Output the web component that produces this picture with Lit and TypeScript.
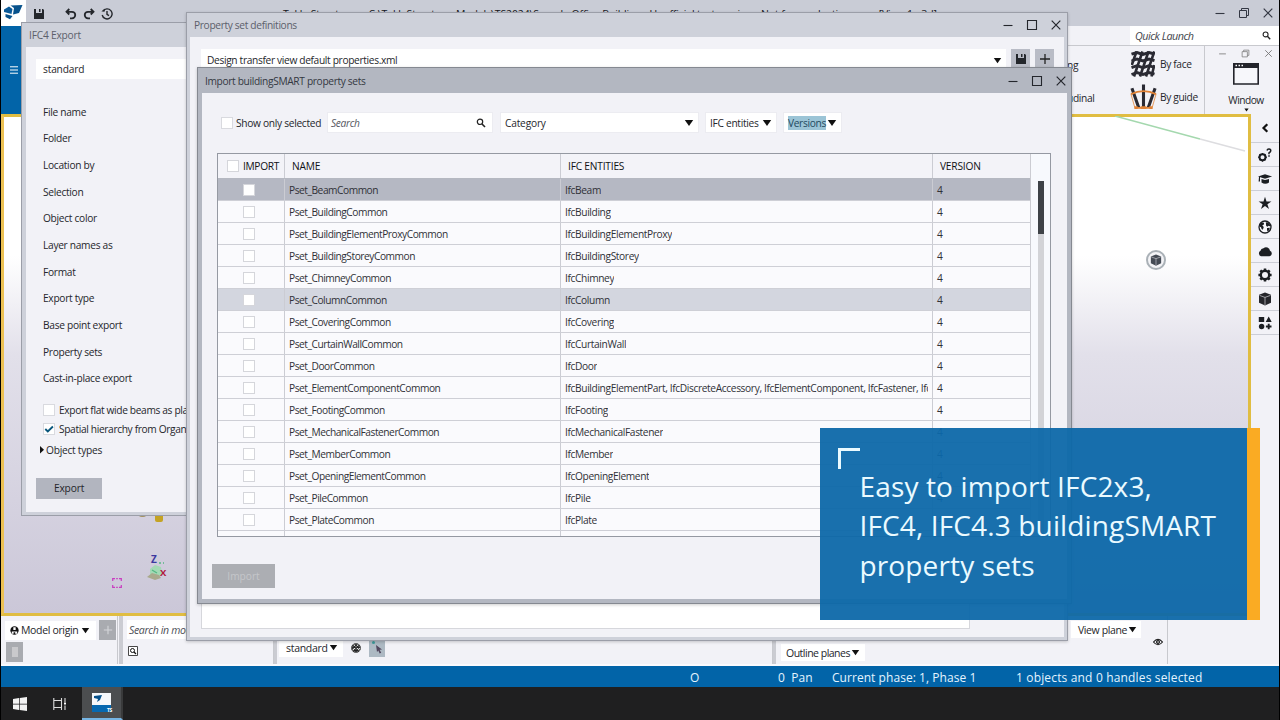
import { LitElement, html, css, svg } from "lit";
import { customElement, property } from "lit/decorators.js";
import { classMap } from "lit/directives/class-map.js";

const ROWS: Array<[string, string]> = [
  ["Pset_BeamCommon", "IfcBeam"],
  ["Pset_BuildingCommon", "IfcBuilding"],
  ["Pset_BuildingElementProxyCommon", "IfcBuildingElementProxy"],
  ["Pset_BuildingStoreyCommon", "IfcBuildingStorey"],
  ["Pset_ChimneyCommon", "IfcChimney"],
  ["Pset_ColumnCommon", "IfcColumn"],
  ["Pset_CoveringCommon", "IfcCovering"],
  ["Pset_CurtainWallCommon", "IfcCurtainWall"],
  ["Pset_DoorCommon", "IfcDoor"],
  ["Pset_ElementComponentCommon", "IfcBuildingElementPart, IfcDiscreteAccessory, IfcElementComponent, IfcFastener, IfcMechanicalFastener"],
  ["Pset_FootingCommon", "IfcFooting"],
  ["Pset_MechanicalFastenerCommon", "IfcMechanicalFastener"],
  ["Pset_MemberCommon", "IfcMember"],
  ["Pset_OpeningElementCommon", "IfcOpeningElement"],
  ["Pset_PileCommon", "IfcPile"],
  ["Pset_PlateCommon", "IfcPlate"],
  ["", ""],
];

const LABELS = [
  "File name", "Folder", "Location by", "Selection", "Object color", "Layer names as",
  "Format", "Export type", "Base point export", "Property sets", "Cast-in-place export",
];

const ICONS: Record<string, { box: string; body: unknown }> = {
  logo: { box: "0 0 24 26", body: svg`<path d="M3 9.500 8 6.500 11.500 9 10.500 14 3 12z" fill="#0a5a99"/><path d="M9.500 5.500 21.500 5 18 13 12 14.500 13 8z" fill="#07528c"/><path d="M4.500 14 11.500 16 9 19.200 4.500 17z" fill="#07528c"/>` },
  save: { box: "0 0 12 12", body: svg`<path d="M1 1h2v4h6V1h1l1 1v9H1z" fill="#24272c"/><path d="M6 1h1.5v3H6z" fill="#24272c"/>` },
  undo: { box: "0 0 12 12", body: svg`<path d="M2 3.800H7a3.200 3.200 0 0 1 0 6.500H5M4.300 1 1.500 3.800 4.300 6.500" fill="none" stroke="#24272c" stroke-width="1.800"/>` },
  redo: { box: "0 0 12 12", body: svg`<path d="M10 3.800H5a3.200 3.200 0 0 0 0 6.500H7M7.700 1l2.800 2.800L7.700 6.500" fill="none" stroke="#24272c" stroke-width="1.800"/>` },
  clock: { box: "0 0 12 12", body: svg`<path d="M2 3a5 5 0 1 1-.8 4M6 3v3.400l2 1.200" fill="none" stroke="#24272c" stroke-width="1.400"/><path d="M.4 3.400h3.400V.8z" fill="#24272c"/>` },
  min: { box: "0 0 12 12", body: svg`<path d="M1.500 6.500h9" stroke="currentColor" stroke-width="1.100"/>` },
  max: { box: "0 0 12 12", body: svg`<path d="M1.500 1.500h9v9h-9z" fill="none" stroke="currentColor" stroke-width="1.100"/>` },
  restore: { box: "0 0 12 12", body: svg`<path d="M1.500 3.500h7v7h-7zM3.500 3.500v-2h7v7h-2" fill="none" stroke="currentColor"/>` },
  close: { box: "0 0 12 12", body: svg`<path d="m1.700 1.700 8.600 8.600m0-8.600-8.600 8.600" stroke="currentColor" stroke-width="1.200"/>` },
  search: { box: "0 0 12 12", body: svg`<circle cx="5" cy="4.800" r="2.700" fill="none" stroke="#222" stroke-width="1.200"/><path d="m7 6.900 3 3.100" stroke="#222" stroke-width="1.500"/>` },
  plus: { box: "0 0 12 12", body: svg`<path d="M6 1v10M1 6h10" stroke="currentColor" stroke-width="1.300"/>` },
  down: { box: "0 0 10 8", body: svg`<path d="M.8 1h8.400L5 7z" fill="#111"/>` },
  right: { box: "0 0 6 8", body: svg`<path d="M1 0v7.400L5 3.700z" fill="#111"/>` },
  menu: { box: "0 0 10 10", body: svg`<path d="M1 1.800h8M1 5h8M1 8.200h8" stroke="#fff" stroke-width="1"/>` },
  mesh: { box: "0 0 24 26", body: svg`<path d="M5.500.5.800 14M11.500.5 3 25.500M17.500.5 9 25.500M23.300.5 15 25.500M23.300 14 20.500 25.500" stroke="#2a2a33" stroke-width="2.600"/><path d="M.5 3.200 6 1.500l6 2 6-2 5.500 1.500M.5 10l5.500-2 6 2 6-2 5.500 1.700M.5 16.700l5.500-2 6 2 6-2 5.500 1.700M.5 23.500l5.500-2 6 2 6-2 5.500 1.700" fill="none" stroke="#2a2a33" stroke-width="2.900"/>` },
  guide: { box: "0 0 28 26", body: svg`<path d="M14 0v24M2 4l7 20M26 4l-7 20" stroke="#2a2a33" stroke-width="3.200"/><path d="M1 10Q14 4 27 10M6 24.300h16" fill="none" stroke="#e08236" stroke-width="1.800"/><path d="m1 10 4 14M27 10l-4 14" stroke="#e08236" stroke-width=".8"/><path d="M4.500 22.500h3.500v3h-3.500zM20 22.500h3.500v3H20zM11 22.500h6v3h-6z" fill="#e08236"/>` },
  window: { box: "0 0 26 22", body: svg`<path d="M.8.800h24.400v20.200H.8z" fill="#f7f7fb" stroke="#23242b" stroke-width="1.600"/><path d="M0 0h26v5H0z" fill="#23242b"/><path d="M2.500 2.500h1.500m1.500 0H7m1.500 0H10" stroke="#fff" stroke-width="1.300"/>` },
  left: { box: "0 0 14 14", body: svg`<path d="M9.300 3.200 5.500 7l3.800 3.800" fill="none" stroke="#111" stroke-width="2.200"/>` },
  help: { box: "0 0 14 14", body: svg`<circle cx="4.500" cy="9.300" r="3" fill="none" stroke="#1b1e22" stroke-width="2"/><path d="M4.500 5v1.500m0 5.700v1.500M.2 9.300h1.500m5.600 0h1.500M1.500 6.300l1 1m4 4 1 1m0-6-1 1m-4 4-1 1" stroke="#1b1e22" stroke-width="1.400"/><path d="M9 2.500Q9.400.8 11 .9q2 .1 1.700 1.900Q12.500 4 11 4.800v1.400M11 7.300v1.500" fill="none" stroke="#1b1e22" stroke-width="1.500"/>` },
  cap: { box: "0 0 14 14", body: svg`<path d="m0 4.500 7-2.300 7 2.300-7 2.200z" fill="#1b1e22"/><path d="M3.500 7 7 8l4-1v3.500q-3.700 2.500-7.500 0zM1 5h1v4.500H.600z" fill="#1b1e22"/>` },
  star: { box: "0 0 14 14", body: svg`<path d="m7 .7 1.500 4.700h4.900l-4 2.800 1.600 4.800L7 10.100 3 13l1.600-4.800-4-2.800h4.900z" fill="#1b1e22"/>` },
  globe: { box: "0 0 14 14", body: svg`<circle cx="7" cy="7" r="6" fill="#f7f7fb" stroke="#1b1e22" stroke-width="1.300"/><path d="M1.500 5 3.500 2.500l2.300.2.300 1.500-1.800 1.200 1.500 1.600-1 2.700-1.200-.7L3 7.300 1.400 6.500zM7.800 2.200l2.400.3 2.300 2.700-.8 1-1.500-.5-.5 1-1.500-.7zM9 8l2.800-.3-.5 2.200-1.500 1.600-.8-1.200z" fill="#1b1e22"/>` },
  cloud: { box: "0 0 14 14", body: svg`<path d="M3 12.200a3 3 0 0 1-.5-5.500 3 3 0 0 1 3-2.500 4 4 0 0 1 6.500 2.500A2.900 2.900 0 0 1 11.500 12.200z" fill="#1b1e22"/>` },
  gear: { box: "0 0 14 14", body: svg`<circle cx="7" cy="7" r="4.200" fill="none" stroke="#1b1e22" stroke-width="2.400"/><path d="M7 .4v2.200m0 8.800v2.200M.4 7h2.200m8.800 0h2.200M2.300 2.300 4 4m6 6 1.700 1.700m0-9.400L10 4m-6 6-1.700 1.700" stroke="#1b1e22" stroke-width="2.500"/>` },
  cube: { box: "0 0 14 14", body: svg`<path d="m7 .6 6 2.200v8L7 13.600l-6-2.800v-8z" fill="currentColor"/><path d="m1.500 3.400 5.500 2 5.500-2M7 5.400V13" fill="none" stroke="#eeeef3" stroke-width=".6"/>` },
  shapes: { box: "0 0 14 14", body: svg`<path d="M.8 1h5.400v5H.8zM10.700.6l3 5.400h-6z" fill="#1b1e22"/><circle cx="3.600" cy="10.500" r="2.700" fill="#1b1e22"/><path d="M10.700 7.700v5.600M7.900 10.500h5.600" stroke="#1b1e22" stroke-width="1.900"/>` },
  person: { box: "0 0 10 10", body: svg`<circle cx="5" cy="5" r="4.600" fill="#111"/><path d="M3.700 1.500h2.600v3H3.700zM2 8.500V6h6v2.500H5.800V7H4v1.500z" fill="#fff"/>` },
  trash: { box: "0 0 16 20", body: svg`<path d="M5 5h6v10H5z" fill="#c9c9cc"/>` },
  framed: { box: "0 0 10 10", body: svg`<path d="M.5.500h9v9h-9z" fill="#fff" stroke="#333" stroke-width=".9"/><circle cx="4.500" cy="4.500" r="2" fill="none" stroke="#111"/><path d="m6 6 2 2" stroke="#111" stroke-width="1.200"/>` },
  hatch: { box: "0 0 10 10", body: svg`<circle cx="5" cy="5" r="4.500" fill="#fff" stroke="#222" stroke-width=".7"/><path d="m1.500 2 6.500 6.500M3.500.8l5.700 5.700M.8 3.500l5.700 5.700M8.500 2 2 8.500M6.500.8.8 6.500M9.200 3.500 3.500 9.200" stroke="#222" stroke-width="1.100"/>` },
  pointer: { box: "0 0 16 16", body: svg`<circle cx="4.500" cy="3.500" r="1.500" fill="#3e9b9b"/><path d="m7 6 6 4.500-2.400.3 1.600 3-1.500.8L9.300 11.500 8 13z" fill="#50455c"/>` },
  eye: { box: "0 0 10 8", body: svg`<path d="M.5 4Q5-1.500 9.500 4 5 9.500.5 4z" fill="none" stroke="#111" stroke-width="1.100"/><circle cx="5" cy="4" r="2" fill="#111"/><path d="M4.600 3h.9v2h-.9z" fill="#fff"/>` },
  check: { box: "0 0 10 10", body: svg`<path d="m1.300 5 2.500 2.500L8.900 2.500" fill="none" stroke="#07567c" stroke-width="1.800"/>` },
  win: { box: "0 0 14 14", body: svg`<path d="m0 2 6-.9v5.600H0zM6.700 1 14 0v6.700H6.700zM0 7.400h6v5.500L0 12zM6.700 7.400H14V14l-7.300-1z" fill="#f2f2f2"/>` },
  task: { box: "0 0 14 14", body: svg`<path d="M.8 1v12M8.500 1v12M.8 3.500h7.700M.8 10.500h7.700M12 1v4m0 3.500V13" fill="none" stroke="#ddd" stroke-width="1.100"/><path d="M11 5.500h2v2h-2z" fill="#fff"/>` },
  app: { box: "0 0 19 19", body: svg`<path d="M0 0h19v12H0z" fill="#f6f8fb"/><path d="M0 12h19v7H0z" fill="#0768b0"/><path d="m2 3 8-1-2 5-3 2 1-3-4-1z" fill="#07528c"/>` },
  axes: { box: "0 0 22 26", body: svg`<path d="m4 14 5-4 6 2 1 7-6 4-6-3z" fill="#a3d9b4"/><path d="m1 22 5-4 7 2 2 3-6 2z" fill="#a9a98c"/><path d="M13 8h2m2 0h1M6 15l5 3" stroke="#55b783" stroke-width="1.300"/>` },
  target: { box: "0 0 10 10", body: svg`<path d="M.7 3V.7H3M7 .7h2.300V3M9.300 7v2.300H7M3 9.300H.7V7M4.200.7h1.600M4.200 9.300h1.600" fill="none" stroke="#c93cc0" stroke-width="1.200"/>` },
};

@customElement("ui-icon")
class UiIcon extends LitElement {
  @property() name = "";
  @property({ type: Number }) w = 12;
  @property({ type: Number }) h = 12;
  static styles = css`:host { display: block; flex: none; } svg { display: block; }`;
  render() {
    const icon = ICONS[this.name];
    return html`<svg width=${this.w} height=${this.h} viewBox=${icon.box}>${icon.body}</svg>`;
  }
}

const ic = (name: string, w = 12, h = w) => html`<ui-icon class="ic-${name}" name=${name} .w=${w} .h=${h}></ui-icon>`;

@customElement("pset-table")
class PsetTable extends LitElement {
  static styles = css`
    :host { display: flex; box-sizing: border-box; width: 834px; height: 384px; border: 1px solid #9599a2; background: #f7f9fd; overflow: hidden; }
    .grid { width: 812px; flex: none; border-right: 1px solid #cbccd2; }
    .row { display: grid; grid-template-columns: 67px 276px 372px 97px; height: 22px; box-sizing: border-box; border-bottom: 1px solid #cecfd6; background: #fafafd; color: #303137; }
    .head { height: 25px; background: #f3f3f8; color: #101115; border-bottom: 1px solid #b5b8c1; font-weight: 500; letter-spacing: -0.2px; }
    .dark { background: #b5b8c3; }
    .mid { background: #d3d6df; }
    .cell { display: flex; align-items: center; box-sizing: border-box; border-right: 1px solid #cbccd3; padding: 0 4px; white-space: nowrap; overflow: hidden; }
    .cell:last-child { border: 0; }
    .name { letter-spacing: -0.46px; }
    .clip { overflow: hidden; letter-spacing: -0.37px; }
    .tick { padding: 0 4px 0 0; justify-content: center; }
    .head .cell { padding-left: 7px; }
    .head .tick { padding: 0 0 0 4px; gap: 4px; font-weight: 400; letter-spacing: -0.3px; }
    .box { width: 12px; height: 12px; box-sizing: border-box; border: 1px solid #d5d6db; background: #fff; flex: none; }
    .rail { width: 6px; height: 355px; margin: 27px 0 0 7px; background: #d2d3d7; }
    .thumb { height: 53px; background: #3e4247; }
  `;
  render() {
    return html`
      <div class="grid">
        <div class="row head">
          <div class="cell tick"><span class="box"></span>IMPORT</div>
          <div class="cell">NAME</div><div class="cell">IFC ENTITIES</div><div class="cell">VERSION</div>
        </div>
        ${ROWS.map(([name, entity], i) => html`
          <div class=${classMap({ row: true, dark: i === 0, mid: i === 5 })}>
            <div class="cell tick"><span class="box"></span></div>
            <div class="cell name">${name}</div>
            <div class="cell"><span class="clip">${entity}</span></div>
            <div class="cell">${name ? "4" : ""}</div>
          </div>`)}
      </div>
      <div class="rail"><div class="thumb"></div></div>`;
  }
}

@customElement("app-root")
class AppRoot extends LitElement {
  static styles = css`
    :host { display: block; position: relative; width: 1280px; height: 720px; overflow: hidden; background: #000; font-family: "Open Sans", "Noto Sans", sans-serif; font-size: 10.2px; letter-spacing: -0.34px; line-height: 14px; color: #25262b; white-space: nowrap; }
    .desk { display: flex; flex-direction: column; height: 720px; margin: 0 1px; background: #f2f2f7; }
    .row { display: flex; align-items: center; }
    .white { background: #fff; box-sizing: border-box; }
    .appbar { height: 26px; background: #c9ccd6; color: #333743; }
    .logo { width: 25px; height: 26px; background: #fff; }
    .quick { gap: 6px; padding-left: 7px; width: 250px; padding-top: 2px; }
    .quick .ic-save { margin-right: 14px; }
    .doc { width: 750px; font-size: 10.500px; letter-spacing: -0.12px; color: #16171b; padding-top: 1px; }
    .wm { gap: 12px; margin-left: auto; padding-right: 5px; }
    .ribbon { display: flex; height: 88px; }
    .side { width: 21px; background: #0264a8; display: flex; align-items: center; justify-content: center; padding-left: 4px; box-sizing: border-box; }
    .tools { margin-left: auto; width: 212px; display: flex; flex-direction: column; }
    .ql { height: 19px; align-items: stretch; border-bottom: 1px solid #c8c9ce; }
    .ql .white { width: 149px; margin-left: auto; display: flex; align-items: center; justify-content: space-between; padding: 0 6px 0 5px; font-style: italic; color: #44464d; font-size: 10.8px; letter-spacing: -0.500px; }
    .ql .ic-search { margin-right: 1px; }
    .tool-grid { display: grid; grid-template-columns: 62px 76px 74px; height: 68px; }
    .frag { display: flex; flex-direction: column; gap: 19px; padding-top: 12px; align-items: flex-start; width: 27px; }
    .acts { display: flex; flex-direction: column; gap: 7px; padding-top: 5px; border-right: 1px solid #c8c9ce; margin-left: -1px; }
    .acts .row { gap: 5px; height: 26px; padding-left: 3px; letter-spacing: -0.35px; }
    .acts .by-guide { gap: 3px; padding-left: 2px; }
    .winbox { display: flex; flex-direction: column; align-items: center; }
    .mini { gap: 14px; padding: 3px 0 5px 7px; color: #777; }
    .winbox .name { margin-top: 8px; padding-left: 8px; letter-spacing: -0.500px; }
    .winbox .ic-window { margin-left: 8px; }
    .winbox .ic-down { margin: 1px 0 0 8px; }
    .stage { display: flex; height: 502px; }
    .view { width: 1250px; box-sizing: border-box; border: 3px solid #e0bd42; border-left-color: #ecc153; position: relative; background: linear-gradient(#fff 0, #fff 28%, #e2e0ea 48%, #cbc7d8 100%); }
    .rail { flex: 1; display: flex; flex-direction: column; }
    .rail div { height: 24px; box-sizing: border-box; display: flex; align-items: center; justify-content: center; border-bottom: 1px solid #ccced6; }
    .rail div:first-child { height: 29px; }
    .axis { position: absolute; left: 1108px; top: -1px; }
    .orb { position: absolute; left: 1142px; top: 133px; width: 20px; height: 20px; box-sizing: border-box; border: 2px solid #aab1b7; border-radius: 50%; background: #f4f4f7; display: flex; align-items: center; justify-content: center; color: #454b55; }
    .tgt { position: absolute; left: 108px; top: 461px; }
    .axes { position: absolute; left: 142px; top: 438px; }
    .zed { position: absolute; left: 147px; top: 435px; color: #3c38a0; font-size: 10px; font-weight: 700; }
    .ex { position: absolute; left: 156px; top: 449px; color: #b0173c; font-size: 9.500px; font-weight: 700; }
    .pin { position: absolute; left: 151px; top: 393px; width: 8px; height: 12px; background: #c4a324; border-radius: 0 0 2px 2px; }
    .pin2 { left: 134px; width: 9px; height: 7px; background: #a29363; border-radius: 0 0 4px 4px; }
    .bars { display: flex; height: 50px; font-size: 10.500px; box-sizing: border-box; border-bottom: 2px solid #fafafd; }
    .g1 { width: 117px; padding: 4px 0 0 4px; box-sizing: border-box; border-right: 1px solid #c8c9ce; }
    .g1 .row { gap: 3px; }
    .g1 .white { display: flex; align-items: center; gap: 2px; height: 19px; width: 91px; padding-left: 5px; }
    .ic-down { margin-left: 1px; }
    .sq { width: 17px; height: 20px; background: #a9abb0; color: #d5d6da; display: flex; align-items: center; justify-content: center; }
    .trash { margin: 2px 0 0 1px; }
    .g2 { margin-left: 1px; width: 155px; box-sizing: border-box; border-left: 4px solid #cbccd2; border-right: 1px solid #c8c9ce; padding: 4px 0 0 4px; font-style: italic; color: #4b4d55; }
    .g2 .white { height: 19px; padding: 3px 2px; margin-bottom: 7px; }
    .g2 .ic-framed { margin-left: 1px; }
    .g3 { width: 499px; box-sizing: border-box; border-left: 3px solid #cbccd2; border-right: 1px solid #c8c9ce; padding-top: 22px; display: flex; align-items: flex-start; gap: 8px; }
    .g3 .white { height: 19px; width: 64px; margin-left: 2px; padding: 1px 7px; display: flex; align-items: center; letter-spacing: -0.300px; }
    .g3 .ic-hatch { margin-top: 5px; }
    .point { width: 16px; height: 18px; background: #adb9c3; margin-top: 1px; }
    .g4 { width: 395px; box-sizing: border-box; border-left: 3px solid #cbccd2; border-right: 1px solid #c8c9ce; padding-left: 5px; display: flex; }
    .g4 .white { display: flex; align-items: center; height: 17px; }
    .out { margin-top: 28px; width: 84px; padding-left: 5px; letter-spacing: -0.500px; }
    .plane { margin: 5px 0 0 206px; width: 70px; padding-left: 7px; letter-spacing: -0.400px; }
    .g4 .ic-eye { margin: 22px 0 0 12px; }
    .status { height: 21px; background: #0264a8; color: #e5f4ff; font-size: 12px; display: grid; grid-template-columns: 689px 88px 54px 184px 1fr; align-items: center; letter-spacing: 0.05px; padding-top: 3px; box-sizing: border-box; }
    .status .count { letter-spacing: 0.160px; }
    .taskbar { height: 33px; background: #1f1f20; }
    .taskbar .ic-win { margin-left: 12px; }
    .taskbar .ic-task { margin: 0 15px 0 26px; }
    .run { width: 41px; height: 33px; background: #4c4e50; border-bottom: 2px solid #76b5e4; border-right: 2px solid #393a3b; box-sizing: border-box; display: flex; justify-content: center; align-items: center; position: relative; }
    .ts { position: absolute; right: 9px; bottom: 4px; font-size: 5px; line-height: 8px; color: #fff; font-weight: 700; }

    .dlg { position: absolute; box-sizing: border-box; border: 1px solid #9b9ea8; background: #ced1da; display: flex; flex-direction: column; }
    .dlg .bar { display: flex; align-items: center; justify-content: space-between; color: #5c606b; flex: none; }
    .dlg .wm { color: #24262c; }
    .dlg .body { flex: 1; background: #f2f2f7; display: flex; flex-direction: column; align-items: flex-start; min-height: 0; }
    .export { left: 21px; top: 22px; width: 169px; height: 494px; padding: 0 0 3px 4px; }
    .export .bar { height: 24px; padding-left: 3px; letter-spacing: -0.2px; }
    .preset { height: 20px; width: 154px; margin: 12px 0 0 10px; padding: 3px 7px; letter-spacing: -0.18px; }
    .labels { display: grid; grid-auto-rows: 26.650px; margin: 19.500px 0 0 17px; align-items: center; letter-spacing: -0.3px; }
    .opts { margin: 11.350px 0 0 17px; display: flex; flex-direction: column; gap: 5px; letter-spacing: -0.35px; }
    .opts .row { gap: 4px; height: 14px; }
    .box { width: 12px; height: 12px; box-sizing: border-box; border: 1px solid #d9dadf; background: #fff; flex: none; display: flex; }
    .types { margin: 6px 0 0 13px; gap: 1px; height: 16px; letter-spacing: -0.25px; }
    .btn { display: flex; align-items: center; justify-content: center; background: #b2b5bf; }
    .exp { width: 66px; height: 21px; margin: 20px 0 0 10px; letter-spacing: -0.150px; }
    .defs { left: 186px; top: 12px; width: 882px; height: 629px; padding: 0 3px 3px 3px; box-shadow: 0 1px 3px #0003; }
    .defs .bar { height: 24px; padding-left: 4px; }
    .defs .wm { padding-right: 2px; }
    .defs .head { gap: 5px; margin: 12px 0 0 11px; align-items: stretch; height: 22px; }
    .defs .file { width: 805px; padding: 0 4px 0 6px; display: flex; align-items: center; justify-content: space-between; }
    .defs .sq { width: 19px; height: 20px; background: #b9bcc6; color: #222; }
    .list { width: 769px; flex: 1; margin: 0 0 8px 11px; border: 1px solid #d6d7dc; border-top: 0; }
    .imp { left: 197px; top: 67px; width: 875px; height: 537px; padding: 0 4px 4px 4px; background: #b3b7c1; border-color: #858991; box-shadow: 0 1px 3px #0003; }
    .imp .bar { height: 25px; color: #333741; padding: 0 0 0 3px; box-sizing: border-box; }
    .imp .wm { padding-right: 0; }
    .filters { margin: 19px 0 0 19px; height: 21px; }
    .filters .white { height: 21px; display: flex; align-items: center; justify-content: space-between; border: 1px solid #ececf1; }
    .show { width: 86px; margin-left: 3px; letter-spacing: -0.3px; }
    .filters .find { width: 166px; margin: 0 7px 0 5px; padding: 0 5px 0 3px; font-style: italic; color: #55575f; }
    .filters .cat { width: 199px; padding: 0 4px; margin-right: 6px; letter-spacing: -0.2px; }
    .filters .ents { width: 72px; padding: 0 4px; margin-right: 6px; letter-spacing: -0.3px; }
    .filters .vers { width: 59px; padding: 0 4px 0 4px; }
    .sel { background: #9bc4d6; color: #1f4a60; }
    pset-table { margin: 20px 0 0 15px; }
    .go { width: 63px; height: 24px; margin: 27px 0 0 10px; background: #acaeb3; color: #c5c6ca; letter-spacing: 0; }
    .callout { position: absolute; left: 820px; top: 428px; width: 440px; height: 192px; box-sizing: border-box; background: rgba(13, 104, 169, 0.95); border-right: 13px solid #faab23; padding: 20px 0 0 18px; color: #eafaff; }
    .corner { width: 22px; height: 21px; box-sizing: border-box; border: solid #eafaff; border-width: 3px 0 0 3px; }
    .words { margin: -2.500px 0 0 21.500px; font-size: 28px; line-height: 39.700px; letter-spacing: 0.140px; }
  `;

  render() {
    return html`
      <div class="desk">
        <div class="appbar row">
          <div class="logo">${ic("logo", 24, 26)}</div>
          <div class="quick row">${ic("save")}${ic("undo")}${ic("redo")}${ic("clock")}</div>
          <div class="doc">Tekla Structures - C:\\TeklaStructuresModels\\TS2024\\Sample Office Building - Unofficial test version - Not for production use - [View 1 - 3d]</div>
          <div class="wm row">${ic("min")}${ic("restore")}${ic("close")}</div>
        </div>
        <div class="ribbon">
          <div class="side">${ic("menu", 10)}</div>
          <div class="tools">
            <div class="row ql"><div class="white"><span>Quick Launch</span>${ic("search", 11)}</div></div>
            <div class="tool-grid">
              <div class="frag"><span>ng</span><span>udinal</span></div>
              <div class="acts">
                <div class="row">${ic("mesh", 24, 26)}<span>By face</span></div>
                <div class="row by-guide">${ic("guide", 27, 26)}<span>By guide</span></div>
              </div>
              <div class="winbox">
                <div class="mini row">${ic("min", 9)}${ic("restore", 9)}${ic("close", 9)}</div>
                ${ic("window", 26, 22)}<span class="name">Window</span>${ic("down", 5, 4)}
              </div>
            </div>
          </div>
        </div>
        <div class="stage">
          <div class="view">
            <svg class="axis" width="140" height="40"><path d="M3 0 88 23" stroke="#a4d8ae" stroke-width="1.500"/><path d="m88 23 45 12" stroke="#dddde0" stroke-width="1.500"/></svg>
            <div class="orb">${ic("cube", 12)}</div>
            <div class="tgt">${ic("target", 10)}</div>
            <div class="axes">${ic("axes", 22, 26)}</div>
            <span class="zed">Z</span><span class="ex">X</span>
            <div class="pin"></div><div class="pin pin2"></div>
          </div>
          <div class="rail">${["left", "help", "cap", "star", "globe", "cloud", "gear", "cube", "shapes"].map((n) => html`<div>${ic(n, 14)}</div>`)}</div>
        </div>
        <div class="bars">
          <div class="g1">
            <div class="row"><div class="white">${ic("person", 9)}<span>Model origin</span>${ic("down", 9, 7)}</div><div class="sq">${ic("plus", 10)}</div></div>
            <div class="sq trash">${ic("trash", 16, 20)}</div>
          </div>
          <div class="g2"><div class="white">Search in model</div>${ic("framed", 10)}</div>
          <div class="g3"><div class="white">standard${ic("down", 9, 7)}</div>${ic("hatch", 10)}<div class="point">${ic("pointer", 16)}</div></div>
          <div class="g4">
            <div class="white out">Outline planes${ic("down", 9, 7)}</div>
            <div class="white plane">View plane${ic("down", 9, 7)}</div>${ic("eye", 10, 8)}
          </div>
        </div>
        <div class="status"><span></span><span>O</span><span>0&nbsp; Pan</span><span>Current phase: 1, Phase 1</span><span class="count">1 objects and 0 handles selected</span></div>
        <div class="taskbar row">${ic("win", 14)}${ic("task", 14)}<div class="run">${ic("app", 19)}<span class="ts">TS</span></div></div>
      </div>

      <section class="dlg export">
        <div class="bar">IFC4 Export</div>
        <div class="body">
          <div class="white preset">standard</div>
          <div class="labels">${LABELS.map((l) => html`<span>${l}</span>`)}</div>
          <div class="opts">
            <div class="row"><span class="box"></span>Export flat wide beams as plates</div>
            <div class="row"><span class="box">${ic("check", 10)}</span>Spatial hierarchy from Organizer</div>
          </div>
          <div class="types row">${ic("right", 6, 8)}Object types</div>
          <div class="btn exp">Export</div>
        </div>
      </section>

      <section class="dlg defs">
        <div class="bar">Property set definitions<div class="wm row">${ic("min")}${ic("max")}${ic("close")}</div></div>
        <div class="body">
          <div class="row head"><div class="white file">Design transfer view default properties.xml${ic("down", 9, 7)}</div><div class="sq">${ic("save")}</div><div class="sq">${ic("plus")}</div></div>
          <div class="white list"></div>
        </div>
      </section>

      <section class="dlg imp">
        <div class="bar">Import buildingSMART property sets<div class="wm row">${ic("min")}${ic("max")}${ic("close")}</div></div>
        <div class="body">
          <div class="filters row">
            <span class="box"></span><span class="show">Show only selected</span>
            <div class="white find"><span>Search</span>${ic("search")}</div>
            <div class="white cat">Category${ic("down", 10, 8)}</div>
            <div class="white ents">IFC entities${ic("down", 10, 8)}</div>
            <div class="white vers"><span class="sel">Versions</span>${ic("down", 10, 8)}</div>
          </div>
          <pset-table></pset-table>
          <div class="btn go">Import</div>
        </div>
      </section>

      <aside class="callout"><div class="corner"></div><div class="words">Easy to import IFC2x3,<br />IFC4, IFC4.3 buildingSMART<br />property sets</div></aside>
    `;
  }
}
